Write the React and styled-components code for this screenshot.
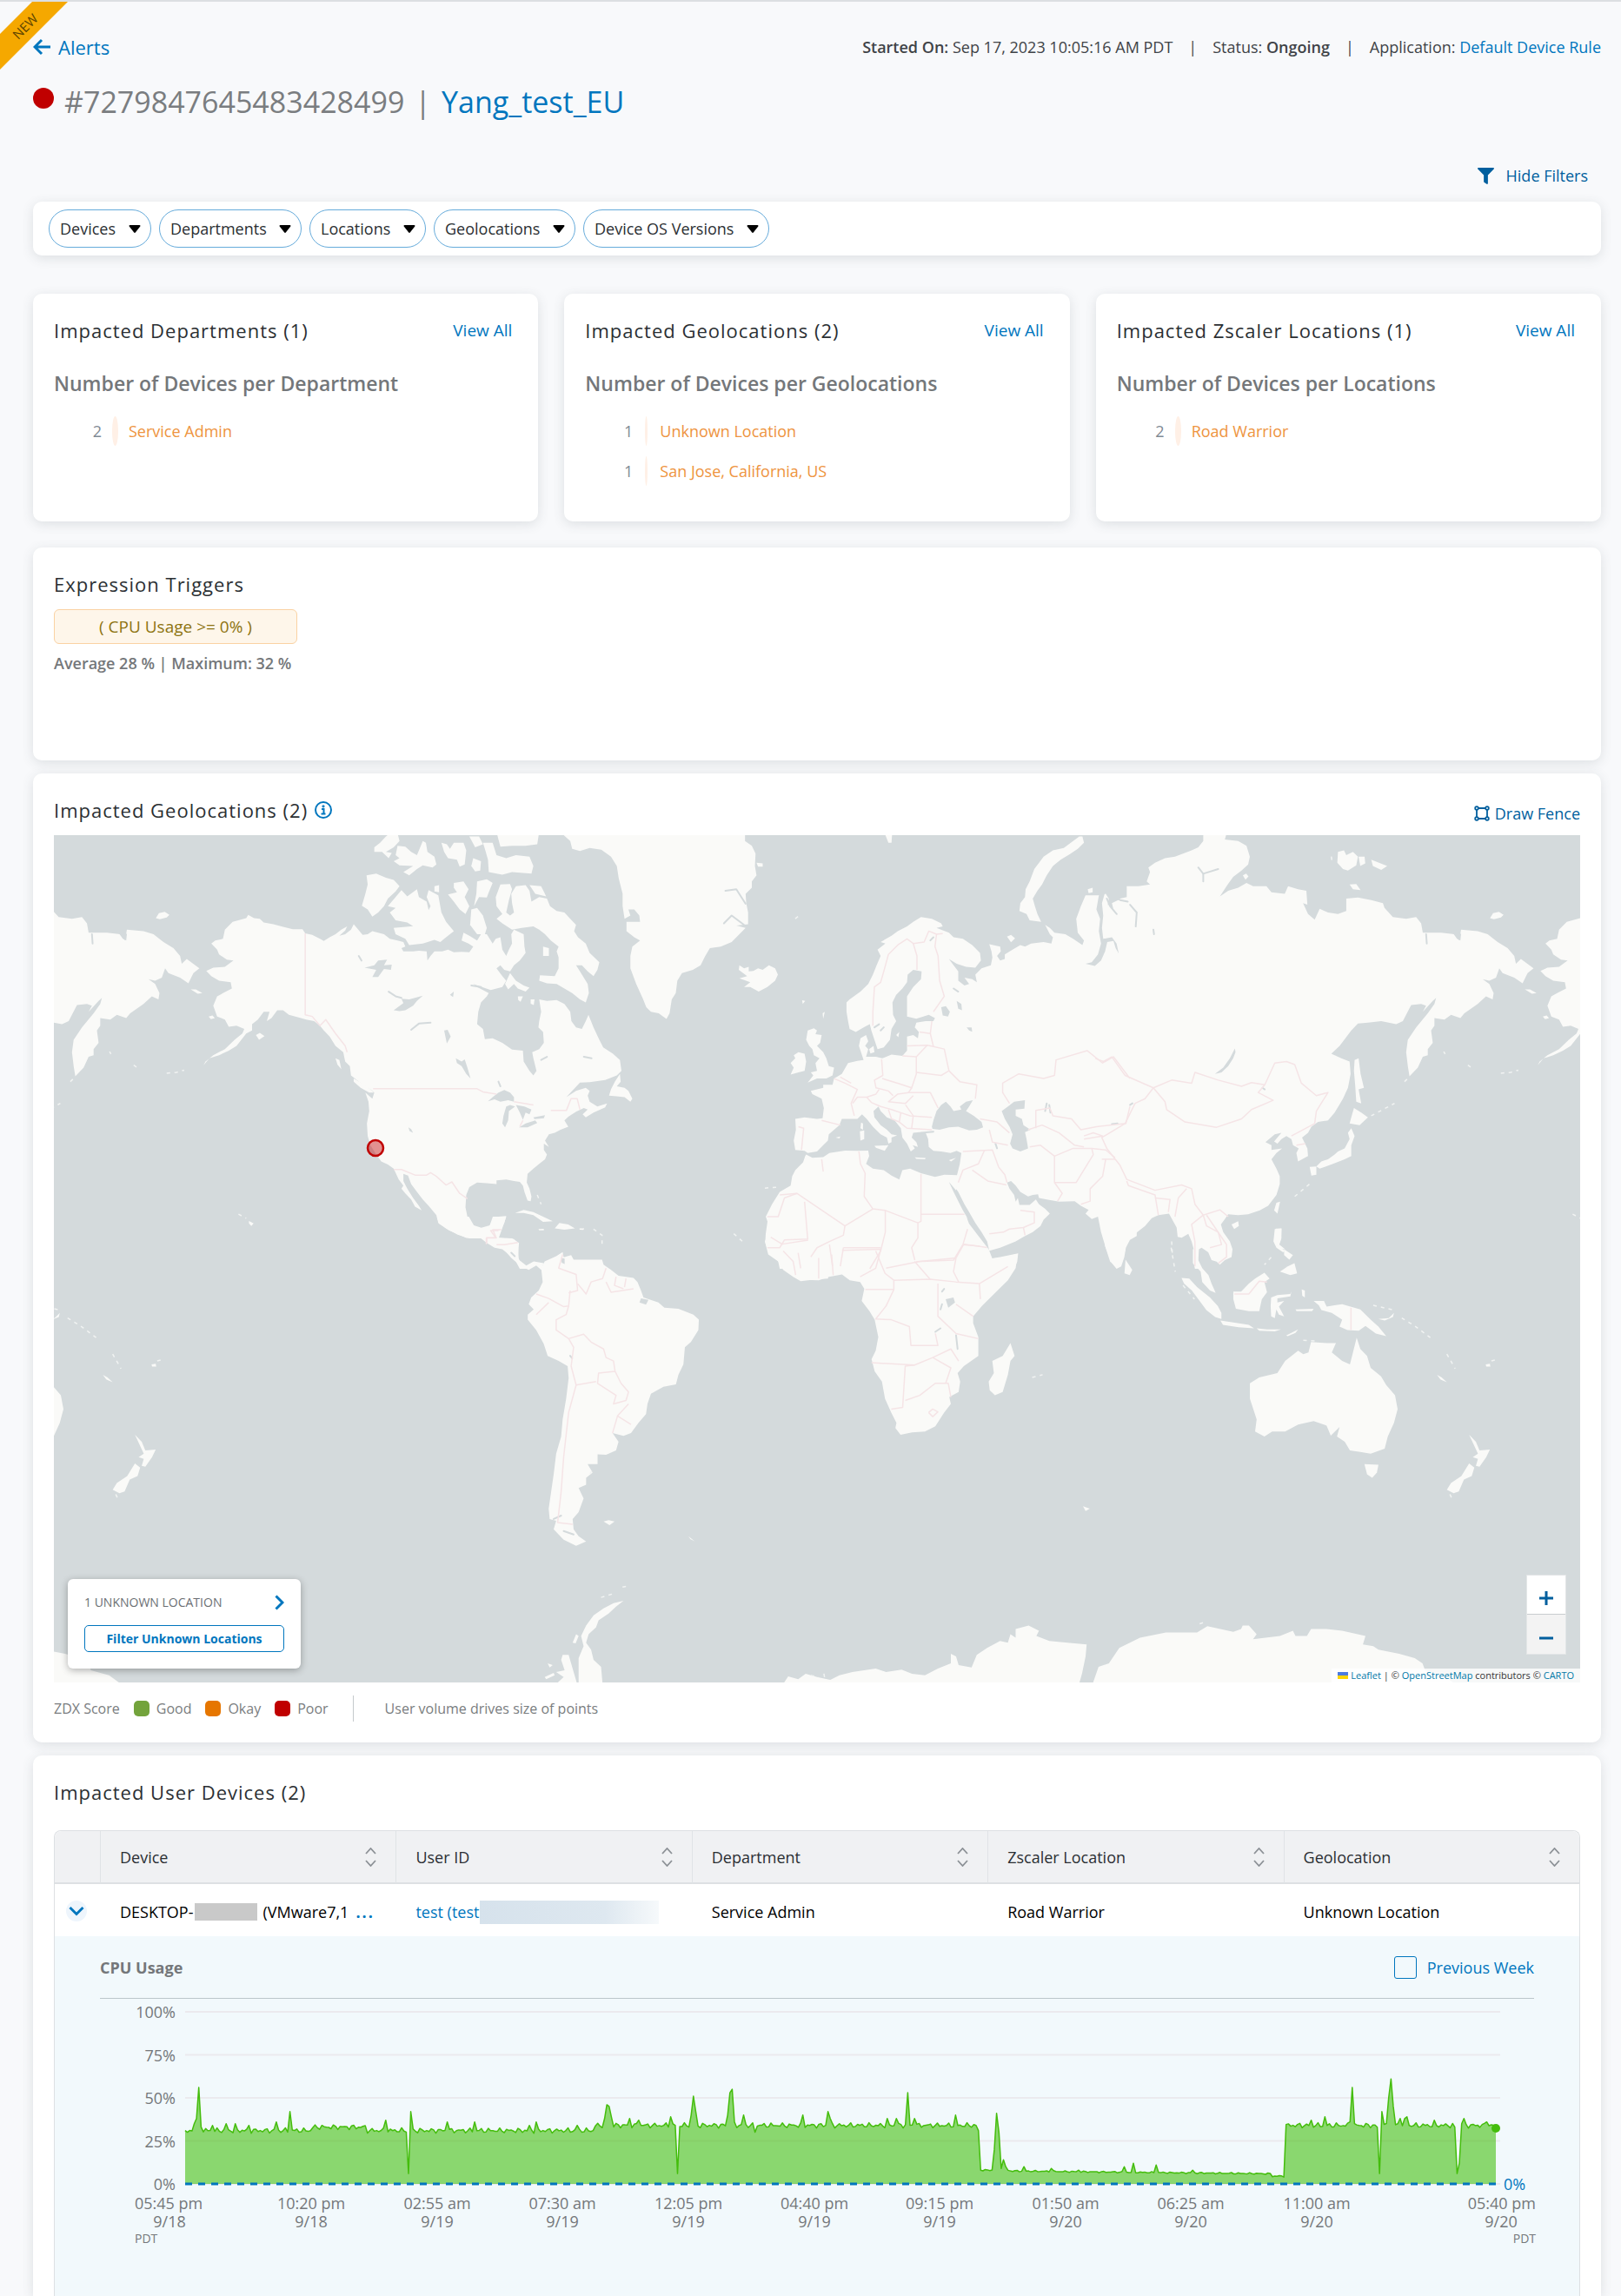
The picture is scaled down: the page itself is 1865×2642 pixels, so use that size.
import React, { useState } from 'react';
import styled, { createGlobalStyle } from 'styled-components';
import { FaFilter } from 'react-icons/fa';

const BLUE = '#0076be';
const DARK_BLUE = '#005f9e';

const GlobalStyle = createGlobalStyle`
  * {
    box-sizing: border-box;
  }

  body {
    margin: 0;
    background: #f8f9fb;
    color: #2b2f33;
    font-family: 'Open Sans', 'Noto Sans', sans-serif;
    font-size: 18px;
    line-height: 28px;
  }

  button,
  select,
  input {
    font: inherit;
    color: inherit;
  }

  h1,
  h2,
  h3,
  p,
  ul {
    margin: 0;
    padding: 0;
    font-weight: 400;
  }

  a {
    color: ${BLUE};
    text-decoration: none;
  }
`;

const Page = styled.main`
  position: relative;
  padding: 38px 23px 0 38px;
  border-top: 2px solid #dcdfe2;
`;

const RibbonClip = styled.div`
  position: absolute;
  top: 0;
  left: 0;
  width: 84px;
  height: 84px;
  overflow: hidden;
`;

const Ribbon = styled.span`
  position: absolute;
  top: 14px;
  left: -36px;
  width: 130px;
  background: #f5a800;
  color: #5c4300;
  font-size: 15px;
  line-height: 29px;
  text-align: center;
  transform: rotate(-45deg);
`;

const TopBar = styled.header`
  display: flex;
  align-items: center;
  justify-content: space-between;
`;

const BackLink = styled.a`
  display: flex;
  align-items: center;
  gap: 8px;
  font-size: 22px;
`;

const Meta = styled.div`
  display: flex;
  gap: 18px;
  color: #3f4347;

  strong {
    font-weight: 600;
  }
`;

const AlertTitle = styled.h1`
  display: flex;
  align-items: center;
  gap: 12px;
  margin-top: 25px;
  color: #7a7d80;
  font-size: 34px;
  line-height: 48px;
`;

const StatusDot = styled.span`
  width: 24px;
  height: 24px;
  margin-bottom: 8px;
  border-radius: 50%;
  background: #c00000;
`;

const FilterToggle = styled.button`
  display: flex;
  align-items: center;
  gap: 14px;
  margin: 47px 15px 16px auto;
  padding: 0;
  border: 0;
  background: none;
  color: ${DARK_BLUE};
  cursor: pointer;
`;

const Surface = styled.section`
  border-radius: 10px;
  background: #fff;
  box-shadow: 0 3px 14px rgba(60, 70, 80, 0.14);
`;

const FilterBar = styled(Surface)`
  display: flex;
  flex-wrap: wrap;
  gap: 9px;
  padding: 9px 18px;
`;

const Pill = styled.label`
  display: grid;
  align-items: center;

  > * {
    grid-area: 1 / 1;
  }

  svg {
    justify-self: end;
    margin-right: 12px;
    pointer-events: none;
  }
`;

const PillSelect = styled.select`
  height: 44px;
  padding: 0 39px 0 12px;
  border: 1px solid #66abdb;
  border-radius: 22px;
  background: #fff;
  appearance: none;
  cursor: pointer;
`;

const CardRow = styled.div`
  display: grid;
  grid-template-columns: repeat(3, 1fr);
  gap: 30px;
  margin: 44px 0 30px;
`;

const Card = styled(Surface)`
  min-height: ${(p) => p.$minHeight || 0}px;
  margin-bottom: ${(p) => p.$gap || 0}px;
  padding: 26px 24px ${(p) => (p.$open ? 0 : 24)}px;
  border-radius: ${(p) => (p.$open ? '10px 10px 0 0' : '10px')};
`;

const CardHead = styled.div`
  display: flex;
  align-items: ${(p) => p.$align || 'center'};
  justify-content: space-between;
  padding-right: ${(p) => p.$inset || 0}px;
`;

const CardTitle = styled.h2`
  display: flex;
  align-items: center;
  gap: 8px;
  font-size: 22px;
  line-height: 32px;
  letter-spacing: 1px;
`;

const ViewAll = styled.a`
  font-size: 19px;
`;

const SubTitle = styled.h3`
  margin: 30px 0 17px;
  color: #74777a;
  font-size: 23px;
  font-weight: 600;
  line-height: 30px;
`;

const CountRow = styled.li`
  display: grid;
  grid-template-columns: 55px 7px 1fr;
  gap: 12px;
  align-items: center;
  height: 46px;
  color: #7f8a94;
  list-style: none;

  span {
    text-align: right;
  }

  i {
    justify-self: center;
    width: ${(p) => (p.$thin ? 3 : 7)}px;
    height: 34px;
    border-radius: 50%;
    background: #fff0e6;
  }

  a {
    color: #ee9440;
  }
`;

const Trigger = styled.p`
  width: 280px;
  margin: 13px 0 8px;
  border: 1px solid #fad2a3;
  border-radius: 6px;
  background: #fef6ea;
  color: #8d7310;
  font-size: 19px;
  line-height: 38px;
  text-align: center;
`;

const TriggerStats = styled.p`
  color: #74777a;
  font-weight: 600;
`;

const TextButton = styled.button`
  display: flex;
  align-items: center;
  gap: 6px;
  padding: 0;
  border: 0;
  background: none;
  color: ${DARK_BLUE};
  line-height: 24px;
  cursor: pointer;
`;

const MapFrame = styled.div`
  position: relative;
  height: 975px;
  margin: 13px 0 15px;
  overflow: hidden;
  background: #d4dadc;
`;

const MapSvg = styled.svg`
  display: block;
  width: 100%;
  height: 100%;

  .land {
    fill: #fafaf8;
  }

  .islets {
    fill: none;
    stroke: #f1f3f2;
    stroke-width: 1.5;
    stroke-dasharray: 4 5;
  }

  .water {
    fill: #d4dadc;
  }

  .river {
    fill: none;
    stroke: #d4dadc;
    stroke-width: 2;
  }

  .border {
    fill: none;
    stroke: #f5e4e6;
    stroke-width: 1.5;
  }

  polygon,
  polyline {
    stroke-linejoin: round;
    vector-effect: non-scaling-stroke;
  }
`;

const UnknownBox = styled.div`
  position: absolute;
  bottom: 16px;
  left: 16px;
  width: 268px;
  padding: 14px 19px 19px;
  border-radius: 6px;
  background: #fff;
  box-shadow: 0 2px 8px rgba(0, 0, 0, 0.3);
  color: #6b6f73;
  font-size: 14px;
`;

const UnknownHead = styled.div`
  display: flex;
  align-items: center;
  justify-content: space-between;
  line-height: 26px;
`;

const OutlineButton = styled.button`
  width: 100%;
  height: 31px;
  margin-top: 13px;
  padding: 0;
  border: 1px solid ${BLUE};
  border-radius: 5px;
  background: #fff;
  color: ${BLUE};
  font-weight: 700;
  line-height: 28px;
`;

const ZoomControl = styled.div`
  position: absolute;
  right: 16px;
  bottom: 32px;
  display: flex;
  flex-direction: column;
  border: 1px solid #e3e6e7;
`;

const ZoomButton = styled.button`
  display: flex;
  align-items: center;
  justify-content: center;
  width: 44px;
  height: 45px;
  padding: 8px 0 0;
  border: 0;
  border-bottom: ${(p) => (p.$off ? 0 : '1px solid #c8cccf')};
  background: ${(p) => (p.$off ? '#f3f3f3' : '#fff')};
`;

const Attribution = styled.div`
  position: absolute;
  right: 0;
  bottom: 0;
  display: flex;
  align-items: center;
  gap: 3px;
  padding: 0 7px;
  background: rgba(255, 255, 255, 0.8);
  color: #333;
  font-size: 11px;
  line-height: 16px;

  a {
    color: #0078a8;
  }
`;

const Legend = styled.div`
  display: flex;
  align-items: center;
  height: 30px;
  color: #7a7d80;
  font-size: 16px;
`;

const Swatch = styled.span`
  display: flex;
  align-items: center;
  gap: 8px;
  margin-left: 16px;

  &::before {
    width: 18px;
    height: 18px;
    border-radius: 5px;
    background: ${(p) => p.$color};
    content: '';
  }
`;

const LegendNote = styled.span`
  margin-left: 28px;
  padding-left: 36px;
  border-left: 1px solid #c5c9cc;
  line-height: 30px;
`;

const DeviceTable = styled.table`
  width: 100%;
  margin-top: 28px;
  border: 1px solid #dde0e3;
  border-bottom: 0;
  border-radius: 8px 8px 0 0;
  border-spacing: 0;
  table-layout: fixed;
`;

const HeadCell = styled.th`
  width: ${(p) => p.$width || 'auto'};
  height: 61px;
  padding: 0 22px;
  border-bottom: 2px solid #dde0e3;
  border-left: ${(p) => (p.$width ? 0 : '1px solid #e0e3e6')};
  background: #f0f1f3;
  font-weight: 400;
  text-align: left;

  &:first-child {
    border-top-left-radius: 8px;
  }

  &:last-child {
    border-top-right-radius: 8px;
  }

  > div {
    display: flex;
    align-items: center;
    justify-content: space-between;
  }
`;

const IconButton = styled.button`
  display: flex;
  align-items: center;
  justify-content: center;
  padding: 0;
  border: 0;
  border-radius: 50%;
  background: ${(p) => p.$bg || 'none'};
  cursor: pointer;
`;

const BodyCell = styled.td`
  height: 60px;
  padding: 4px 23px 0;
  color: #000;
  white-space: nowrap;

  &:first-child {
    padding: 2px 13px 0;
  }
`;

const CellLine = styled.div`
  display: flex;
  align-items: center;
`;

const Redacted = styled.span`
  width: ${(p) => p.$width}px;
  height: ${(p) => p.$height}px;
  margin: 0 7px 0 1px;
  background: ${(p) => p.$fill};
`;

const Dots = styled.a`
  margin-left: 8px;
  font-weight: 700;
  letter-spacing: 2px;
`;

const DetailCell = styled.td`
  padding: 0 52px;
  background: #f2f9fc;
`;

const DetailHead = styled.div`
  display: flex;
  align-items: center;
  justify-content: space-between;
  height: 72px;
  border-bottom: 1px solid #bcc6cb;
`;

const DetailTitle = styled.h3`
  color: #74777a;
  font-size: 18px;
  font-weight: 700;
`;

const CheckLabel = styled.label`
  display: flex;
  align-items: center;
  gap: 12px;
  color: ${BLUE};
`;

const CheckBox = styled.input`
  width: 26px;
  height: 26px;
  margin: 0;
  border: 1px solid ${BLUE};
  border-radius: 3px;
  appearance: none;

  &:checked {
    background: ${BLUE};
  }
`;

const ChartSvg = styled.svg`
  display: block;
  width: 100%;
  overflow: visible;

  text {
    fill: #74777a;
    font-size: 18px;
    text-anchor: middle;
  }

  .end {
    text-anchor: end;
  }

  .start {
    text-anchor: start;
  }

  .middle {
    text-anchor: middle;
  }

  .zone {
    font-size: 14px;
  }

  .now {
    fill: ${BLUE};
    text-anchor: start;
  }
`;

// Coastlines, grouped by region. Every region has its own digitising grid,
// the transform puts it on the 1756x975 mercator canvas.
const REGIONS = [
  {
    id: 'north-america',
    transform: 'translate(-22 -61) scale(0.44643 0.35714)',
    land: [
      '550,428 565,438 580,440 590,452 615,458 640,466 665,474 690,474 697,487 715,492 735,505 745,512 760,500 775,490 790,475 805,465 800,478 785,495 800,490 815,475 822,458 830,470 845,492 858,490 870,480 885,485 900,490 915,505 935,510 950,515 955,530 945,535 950,545 975,545 990,543 1010,545 1012,575 1020,560 1030,545 1050,545 1065,540 1080,548 1100,547 1120,548 1130,530 1118,520 1100,510 1105,485 1120,495 1140,510 1150,490 1165,490 1180,520 1188,505 1200,500 1205,540 1215,560 1222,540 1230,520 1228,490 1235,475 1260,490 1262,530 1265,550 1250,575 1235,590 1225,610 1210,605 1200,590 1190,600 1205,625 1215,640 1205,660 1190,665 1175,670 1130,650 1140,660 1170,680 1165,690 1150,710 1143,740 1140,780 1155,795 1160,828 1180,825 1205,840 1230,862 1258,865 1260,900 1275,930 1285,945 1293,930 1285,890 1282,870 1300,860 1312,840 1310,805 1298,790 1300,770 1305,740 1300,700 1320,705 1345,702 1365,715 1380,740 1383,770 1395,790 1410,795 1420,770 1427,750 1440,790 1455,830 1465,855 1490,875 1508,895 1512,930 1500,945 1470,960 1430,967 1405,968 1385,995 1370,1015 1395,995 1420,985 1430,995 1425,1010 1430,1030 1450,1045 1475,1035 1470,1048 1440,1065 1420,1080 1412,1070 1425,1055 1415,1050 1395,1062 1375,1078 1365,1090 1375,1110 1355,1120 1340,1130 1325,1135 1315,1155 1325,1175 1312,1165 1312,1185 1320,1200 1315,1215 1300,1230 1285,1245 1270,1262 1268,1290 1275,1310 1280,1335 1278,1350 1270,1348 1262,1320 1258,1300 1250,1288 1235,1285 1215,1280 1190,1283 1190,1295 1165,1292 1140,1290 1120,1305 1112,1330 1110,1370 1115,1400 1125,1425 1145,1438 1170,1435 1180,1410 1195,1400 1215,1398 1210,1420 1200,1445 1195,1468 1230,1470 1248,1485 1245,1530 1255,1555 1275,1568 1250,1568 1240,1545 1225,1525 1205,1505 1185,1500 1165,1485 1150,1470 1120,1470 1090,1458 1060,1438 1040,1420 1035,1395 1015,1365 1000,1345 985,1320 970,1295 962,1268 950,1262 950,1285 960,1310 975,1340 990,1365 997,1380 980,1368 970,1345 955,1325 945,1310 950,1300 938,1280 925,1245 910,1232 893,1222 880,1200 865,1170 858,1140 856,1100 862,1060 860,1030 852,1000 870,1020 875,1000 865,990 845,975 830,960 815,945 812,915 800,900 795,870 775,850 760,820 745,800 735,785 720,770 700,765 680,758 655,750 640,735 625,735 610,760 598,770 605,740 590,740 575,765 560,780 560,800 545,810 520,850 500,865 475,880 450,890 435,912 440,900 460,880 490,860 515,830 535,810 540,795 520,785 500,788 490,765 470,755 460,720 470,690 485,680 508,665 505,645 475,640 455,625 442,608 460,598 490,595 512,575 495,572 475,555 470,540 455,520 465,510 485,505 490,475 510,450 545,438',
      '822,955 840,968 858,982 874,1000 862,1000 840,985 822,965',
      '775,890 785,895 790,925 780,910',
      '570,815 580,808 592,818 578,830',
      '1508,940 1510,965 1500,980 1520,985 1530,995 1540,1020 1535,1030 1520,1015 1500,1012 1480,1010 1485,990 1495,965',
      '855,300 880,295 905,308 925,315 940,335 930,352 910,375 900,400 885,420 870,433 858,410 843,398 852,360 858,330',
      '945,348 960,368 985,345 990,370 1010,385 1015,412 1020,400 1010,370 1015,348 1040,365 1048,420 1060,450 1080,480 1060,500 1045,515 1030,508 1000,520 965,525 955,505 930,490 925,470 975,464 960,452 930,445 915,420 930,405 910,400 930,370',
      '875,210 890,195 905,175 915,165 935,165 940,190 925,210 905,225 920,228 912,245 895,225 875,225',
      '935,205 955,208 970,225 985,235 1000,190 1008,195 1012,225 1030,240 1035,265 1025,275 1000,268 985,280 965,300 950,290 975,270 940,268 925,255 940,245 930,235',
      '1048,195 1062,200 1070,215 1080,195 1105,195 1112,220 1108,265 1095,272 1088,250 1065,245 1055,225',
      '1130,245 1150,255 1148,285 1135,288 1125,270',
      '1155,195 1180,195 1190,235 1215,245 1240,235 1275,240 1285,270 1280,295 1230,290 1205,298 1170,290 1168,250 1160,215',
      '1190,160 1300,160 1295,200 1265,205 1230,205 1200,208 1195,185',
      '1120,175 1145,175 1155,200 1135,210',
      '1080,325 1105,320 1118,345 1108,370 1120,400 1110,425 1095,410 1080,385 1065,362 1088,355 1080,340',
      '1140,320 1165,313 1180,325 1170,355 1165,372 1145,370 1132,400 1138,360',
      '1125,410 1140,405 1155,430 1165,470 1160,490 1140,490 1122,460',
      '1200,330 1225,328 1230,345 1222,380 1215,420 1225,430 1235,420 1230,390 1228,360 1240,335 1265,332 1275,350 1280,385 1300,370 1320,375 1328,400 1345,415 1365,420 1380,440 1395,460 1390,480 1400,500 1420,520 1430,550 1455,580 1450,605 1440,625 1425,610 1410,590 1395,590 1405,610 1425,650 1428,680 1420,710 1405,700 1385,680 1365,665 1345,650 1320,648 1300,640 1302,622 1340,625 1350,600 1350,565 1345,545 1350,530 1330,510 1315,490 1300,475 1285,465 1255,470 1230,475 1205,455 1190,440 1205,425 1190,400 1188,370',
      '1275,332 1305,335 1318,368 1290,360',
      '1225,615 1240,640 1260,655 1275,662 1265,675 1245,665 1235,650 1220,668 1212,650',
      '1310,530 1325,535 1325,560 1310,560',
      '1030,335 1042,332 1042,355 1030,352',
      '1245,690 1258,690 1252,708 1246,702',
      '1278,700 1288,700 1286,718 1278,714',
      '1358,165 1380,190 1385,215 1405,222 1430,212 1460,218 1485,240 1500,270 1505,310 1515,360 1515,400 1520,440 1535,430 1530,410 1545,410 1558,430 1560,450 1525,450 1525,480 1545,500 1560,510 1540,530 1535,560 1535,600 1550,650 1568,700 1590,705 1590,165',
      '402,668 415,668 432,680 420,682',
      '448,755 458,752 464,760 454,764',
      '312,438 320,422 335,418 347,428 340,436 322,442',
      '1238,1388 1260,1378 1285,1385 1310,1400 1335,1415 1310,1417 1285,1395 1260,1388',
      '1340,1438 1352,1420 1375,1425 1392,1438 1365,1442',
      '1298,1440 1312,1439 1312,1444 1300,1444',
      '1404,1438 1416,1438 1414,1443 1404,1442',
      '552,1414 564,1422 558,1430 552,1422',
    ],
    islets: ['525,1392 545,1405', '340,938 365,935 385,928', '255,912 262,918', '1295,1330 1305,1360', '1440,1440 1462,1460 1462,1500'],
    water: [
      '1168,1028 1180,1015 1195,1000 1210,992 1225,1000 1235,1015 1235,1030 1220,1025 1200,1030 1185,1022',
      '1215,1045 1208,1075 1205,1100 1212,1112 1220,1090 1222,1060 1238,1045 1225,1040',
      '1240,1040 1262,1045 1280,1055 1275,1070 1265,1065 1258,1088 1250,1065',
      '1248,1112 1265,1100 1290,1090 1295,1098 1270,1112',
      '1285,1080 1315,1073 1312,1083 1288,1086',
      '1085,890 1100,900 1108,893 1115,920 1123,955 1112,940 1100,915 1088,905',
      '850,598 875,590 885,575 908,572 900,590 920,588 918,605 900,602 885,628 870,628 880,605',
      '925,735 950,712 945,698 965,700 1000,688 985,705 975,720 955,735 940,738',
      '1070,685 1080,675 1078,692',
      '1055,800 1064,798 1072,820 1062,842',
      '963,1112 970,1118 975,1130 966,1124',
    ],
    river: ['912,675 930,690 945,695', '970,798 990,778 1020,775', '835,560 842,575', '1125,655 1150,660', '1195,965 1200,980', '1305,895 1320,885', '1415,885 1435,890'],
    border: [
      '697,487 697,750 715,755 735,785 750,765 775,810 800,850 805,870',
      '872,988 1140,988 1155,998 1190,1005',
      '1235,1030 1285,1040',
      '1330,1058 1370,1058 1382,1020 1398,1020 1405,1055',
      '925,1248 945,1248 980,1266 1010,1266 1020,1258 1035,1270 1060,1298 1075,1288 1095,1325 1115,1342',
      '1165,1485 1165,1468 1188,1468 1175,1445 1195,1445',
      '1190,1490 1210,1490 1245,1483',
      '1250,1110 1258,1090',
    ],
  },
  {
    id: 'europe-africa',
    transform: 'translate(678 -61) scale(0.35714)',
    land: [
      '0,165 0,700 10,725 25,740 50,745 75,763 85,745 92,700 105,680 110,640 125,615 160,605 185,590 200,560 215,535 250,530 285,515 305,495 330,470 300,462 338,458 338,420 332,390 330,360 350,340 350,320 365,300 360,270 362,230 350,205 328,190 328,165',
      '365,260 385,262 385,272 370,272',
      '310,590 325,600 340,595 340,610 355,608 370,600 385,605 405,590 425,600 434,620 425,640 400,660 372,675 345,660 325,660 345,645 310,632 335,625 308,605',
      '778,165 790,195 800,195 802,165',
      '1415,175 1420,195 1400,215 1375,232 1345,250 1320,270 1300,300 1285,330 1270,350 1255,375 1262,400 1270,425 1282,450 1245,445 1235,425 1212,415 1215,390 1230,370 1232,345 1245,320 1260,280 1290,240 1320,220 1355,212 1385,190 1405,175',
      '1172,498 1185,492 1198,503 1185,516',
      '1432,345 1448,340 1448,355 1435,358',
      '655,710 665,700 700,675 725,650 740,620 752,590 765,560 755,540 780,520 765,515 800,495 820,480 850,465 870,450 895,435 930,440 960,455 965,465 945,470 985,485 1000,500 1030,505 1060,525 1085,550 1088,575 1070,598 1040,595 1010,585 985,570 1000,590 1015,610 1015,640 1035,655 1050,650 1035,630 1060,635 1075,645 1070,620 1090,600 1120,590 1125,565 1122,545 1115,522 1150,530 1152,545 1140,560 1150,575 1165,570 1165,555 1190,540 1215,525 1230,530 1250,520 1290,515 1315,520 1320,500 1310,490 1295,460 1310,470 1325,485 1360,490 1385,505 1415,525 1420,510 1400,485 1395,440 1410,400 1425,365 1465,365 1490,360 1500,375 1495,405 1510,425 1540,435 1515,410 1510,390 1530,380 1550,385 1568,395 1590,395 1590,1462 1568,1475 1555,1500 1550,1530 1540,1560 1525,1568 1510,1550 1490,1500 1475,1450 1465,1400 1445,1408 1425,1390 1435,1378 1410,1365 1390,1350 1340,1352 1300,1345 1275,1340 1272,1328 1255,1330 1240,1335 1215,1320 1200,1300 1185,1285 1172,1290 1180,1310 1195,1330 1200,1352 1207,1340 1212,1362 1245,1362 1265,1345 1275,1360 1295,1375 1310,1390 1290,1410 1280,1430 1255,1450 1225,1465 1200,1480 1150,1500 1115,1510 1108,1480 1090,1450 1070,1420 1050,1385 1035,1360 1015,1320 1000,1300 1010,1270 1020,1230 1025,1195 1010,1188 990,1195 960,1190 935,1188 920,1175 918,1150 910,1130 890,1128 870,1130 865,1145 880,1160 885,1175 868,1170 875,1180 862,1190 850,1165 835,1145 830,1115 810,1090 785,1080 765,1060 758,1045 742,1060 745,1080 765,1105 785,1120 800,1135 818,1138 800,1145 800,1160 790,1165 785,1145 765,1135 740,1110 720,1085 705,1070 690,1085 665,1085 640,1085 632,1105 615,1120 598,1135 595,1155 580,1170 560,1190 530,1195 520,1188 490,1185 485,1155 492,1120 490,1085 520,1080 560,1085 578,1083 582,1050 575,1020 545,1005 540,995 560,990 580,985 580,975 610,975 615,955 640,940 660,905 690,898 710,895 705,880 695,850 700,825 718,815 725,835 715,850 725,860 718,885 750,885 770,890 800,878 835,882 850,865 850,820 870,815 885,825 888,805 875,790 880,775 910,770 935,770 940,760 920,750 880,762 850,755 850,715 850,690 870,660 895,635 897,610 870,605 852,620 850,645 835,665 815,685 803,710 805,750 815,770 800,795 795,830 775,855 755,860 745,830 735,800 730,780 710,790 685,805 665,795 660,770 655,740',
      '530,800 550,793 560,800 555,812 575,815 570,840 560,850 580,870 590,890 598,915 615,920 610,945 590,955 560,955 530,968 548,945 540,935 560,930 555,905 568,890 550,880 545,860 535,850 525,830',
      '500,870 520,875 525,900 520,930 500,935 475,942 485,920 475,905 490,890 485,880',
      '728,860 742,850 745,870 732,874',
      '815,815 825,805 822,822',
      '702,1097 708,1100 708,1120 700,1115',
      '698,1125 712,1122 712,1150 700,1155',
      '745,1172 790,1170 778,1188 750,1178',
      '875,1209 910,1211 908,1215 880,1214',
      '985,1218 1008,1210 992,1222',
      '620,1145 635,1142 632,1148',
      '512,703 522,705 514,715',
      '578,745 585,740 580,762',
      '525,1200 545,1210 580,1208 600,1195 650,1187 690,1188 725,1187 728,1205 718,1230 740,1245 775,1250 800,1268 825,1280 835,1250 860,1245 895,1260 940,1272 970,1265 1012,1266 1008,1315 985,1288 1000,1320 1015,1350 1030,1380 1042,1400 1045,1430 1065,1460 1085,1490 1105,1505 1115,1515 1120,1535 1150,1530 1208,1518 1205,1545 1195,1568 460,1568 440,1568 435,1545 420,1525 400,1505 392,1480 402,1455 402,1420 395,1400 415,1360 440,1320 475,1300 480,1270 490,1250 515,1225 522,1205',
    ],
    islets: ['392,1308 435,1305', '292,1455 320,1480', '490,440 500,432'],
    water: [
      '930,1110 935,1090 945,1060 960,1040 975,1030 990,1045 1000,1060 1025,1055 1020,1045 1040,1030 1062,1025 1050,1045 1040,1060 1065,1075 1090,1095 1095,1112 1075,1120 1050,1122 1015,1110 985,1112 955,1120 932,1117',
      '1155,1060 1175,1045 1195,1030 1230,1025 1228,1052 1200,1055 1200,1075 1220,1085 1225,1105 1248,1120 1230,1128 1235,1150 1240,1180 1215,1190 1190,1180 1182,1165 1190,1135 1180,1110 1165,1085',
      '960,725 975,722 988,740 982,755 965,752',
      '1010,705 1025,715 1027,735 1015,730',
      '1042,790 1058,790 1060,804 1050,800',
      '1470,355 1488,355 1478,390 1482,430 1478,470 1482,505 1510,500 1525,520 1532,552 1522,535 1515,512 1495,515 1488,545 1475,575 1455,592 1425,585 1445,580 1465,555 1475,520 1468,480 1472,440 1460,410 1467,370',
    ],
    river: ['265,350 300,345 330,392', '260,455 285,430 325,460', '1300,1035 1295,1060', '1308,1040 1312,1065', '745,790 760,780', '765,800 775,790', '895,1130 935,1126', '925,510 935,500', '1000,665 1015,675', '1510,1102 1528,1100', '1135,1165 1140,1180'],
    border: [
      '740,785 740,740 745,660 765,645 775,610 790,555 820,525 850,505 870,520 905,515 920,480 945,490 965,488',
      '945,490 940,530 950,560 955,640 970,690 935,740',
      '870,520 882,560 882,605',
      '768,893 772,945 745,960 750,985 790,995 805,1010',
      '770,955 820,970 865,985 880,940 880,885 835,882',
      '850,850 915,848 935,852 925,810 890,805',
      '925,810 930,770',
      '880,935 960,945 985,930 970,860 935,852',
      '880,885 915,848',
      '985,930 1020,965 1075,975 1070,1020',
      '865,985 855,1000 925,1000 950,1050',
      '855,1000 820,1005 790,1030 845,1035 870,1010',
      '675,1035 690,1015 720,1015 750,1005 760,990',
      '615,955 650,970 690,990 670,1035 680,1075',
      '635,950 670,970',
      '720,1015 735,1032 765,1045 800,1055 830,1065 860,1075 930,1080',
      '830,1065 825,1095 850,1115 930,1120',
      '845,1040 870,1075 865,1115',
      '790,1055 800,1085 825,1095',
      '575,1090 635,1105',
      '500,1110 517,1115 510,1185',
      '1180,1035 1158,1000 1158,970 1210,940 1290,955 1325,945 1330,895 1430,865 1480,905 1515,885 1568,955',
      '1265,1115 1265,1058 1310,1050 1320,1075 1380,1085 1410,1120 1460,1110 1555,1100 1568,1045',
      '1240,1120 1285,1105 1340,1130 1390,1170 1420,1175',
      '1420,1140 1450,1130 1480,1140 1420,1150',
      '1245,1175 1280,1170 1325,1205 1325,1290 1395,1290 1450,1200 1445,1180',
      '1325,1205 1385,1180 1445,1180 1490,1185 1520,1210',
      '1325,1290 1350,1325 1335,1350',
      '1410,1360 1440,1350 1440,1310 1480,1270 1490,1215',
      '1085,1085 1140,1095 1180,1130',
      '1115,1120 1125,1160 1175,1170',
      '1030,1190 1125,1185 1145,1240 1165,1265 1172,1290',
      '1100,1185 1080,1230 1030,1250 1015,1290',
      '1060,1250 1110,1285 1170,1298',
      '1115,1455 1160,1450 1180,1440 1225,1435 1260,1420 1260,1385 1215,1380',
      '1225,1435 1230,1460',
      '895,1262 895,1415 885,1420 885,1468 865,1500 875,1540',
      '895,1392 1035,1392',
      '885,1420 780,1380 740,1375 712,1335 715,1260 700,1230 695,1190',
      '740,1375 650,1430 495,1325 440,1330',
      '495,1325 455,1340 435,1400 400,1400',
      '520,1352 530,1472 455,1475 440,1500 400,1500',
      '650,1430 645,1460 600,1480 560,1500 540,1530',
      '780,1380 780,1450 765,1510 730,1568',
      '645,1500 765,1500',
      '645,1500 635,1560',
      '600,1490 610,1560',
      '575,1215 580,1255',
      '1045,1440 1030,1490 1085,1495',
      '1030,1490 1000,1540 880,1545',
    ],
  },
  {
    id: 'asia',
    transform: 'translate(1198 -61) scale(0.3827 0.35714)',
    land: [
      '95,335 130,335 165,330 155,320 165,290 160,275 180,260 210,245 240,240 290,220 310,210 325,190 325,165 395,165 390,185 430,190 455,205 465,240 460,265 440,285 415,305 395,335 375,368 400,350 430,340 455,325 475,335 515,335 530,355 570,360 580,335 610,345 635,350 638,395 625,390 640,425 660,443 675,408 700,420 730,425 755,415 755,375 790,372 830,380 865,390 870,405 895,435 935,440 965,435 980,455 985,485 1040,485 1080,490 1095,510 1100,475 1150,480 1180,490 1210,515 1240,535 1260,560 1265,585 1280,570 1318,600 1300,615 1285,648 1260,630 1225,615 1215,600 1205,630 1185,640 1165,635 1185,650 1198,680 1195,700 1175,690 1150,715 1110,745 1098,760 1070,750 1050,765 1020,760 1020,785 1010,800 1015,840 1000,860 1000,880 985,885 970,920 945,948 940,915 935,870 940,830 965,790 1000,745 1020,715 1025,695 1015,705 985,740 995,720 980,715 950,718 925,770 905,780 860,770 820,775 790,778 770,800 735,850 710,875 740,890 765,900 768,940 760,985 745,1020 720,1065 700,1090 670,1095 650,1110 640,1130 622,1145 638,1180 640,1205 610,1222 605,1195 612,1180 595,1170 590,1150 575,1140 560,1150 548,1165 538,1158 560,1130 540,1135 512,1160 530,1170 530,1185 562,1180 545,1195 530,1215 545,1245 555,1270 555,1295 545,1330 520,1365 495,1380 460,1392 430,1395 400,1392 390,1408 378,1425 385,1450 405,1480 413,1505 410,1530 390,1540 375,1555 365,1545 350,1540 340,1515 320,1500 312,1505 310,1540 315,1568 300,1568 295,1545 300,1520 290,1480 280,1455 260,1468 248,1465 245,1435 232,1410 222,1390 190,1395 170,1405 150,1430 120,1455 95,1475 90,1510 80,1550 65,1562 45,1545 30,1495 25,1450 25,400 40,395 60,415 75,375 95,370',
      '730,225 748,220 755,235 775,225 790,240 785,268 760,285 745,280 728,260',
      '792,240 810,240 812,262 797,270',
      '830,250 850,258 878,270 860,283 835,270',
      '765,330 785,328 798,348 775,345',
      '444,300 454,295 461,304 452,314',
      '780,895 792,890 798,940 808,985 792,990 800,1035 785,1030 782,980 778,930',
      '778,1050 800,1065 820,1080 795,1105 765,1100 770,1080',
      '770,1115 780,1140 770,1170 770,1205 750,1215 715,1230 690,1240 675,1245 665,1238 680,1222 700,1215 720,1200 730,1190 750,1180 765,1150 760,1130',
      '645,1240 665,1238 665,1265 650,1268',
      '545,1355 556,1352 548,1390 538,1380',
      '410,1425 430,1415 432,1430 418,1440',
      '540,1440 560,1438 560,1470 552,1495 570,1510 565,1515 545,1500 536,1480',
    ],
    islets: ['830,1075 900,1035', '930,965 940,955', '1048,868 1052,876', '600,1335 650,1290', '230,1480 232,1520', '710,240 712,255'],
    water: [
      '420,858 422,870 415,890 400,915 380,935 360,940 385,920 405,890',
      '1070,478 1085,475 1100,490 1098,510 1088,505',
    ],
    river: ['310,275 325,295 325,320', '325,295 370,280', '35,375 45,400 65,425', '105,395 125,420 122,465', '98,385 75,380', '995,490 997,520', '175,475 177,490', '503,985 510,990', '105,1040 112,1035'],
    border: [
      '0,890 25,900 50,885 90,945 175,985 150,1020 120,1035 90,1100 20,1145 35,1180 75,1235 95,1280 180,1315 260,1298 290,1310 300,1360 325,1395 375,1378 400,1400',
      '175,985 230,960 290,970 300,935 370,960 440,980 470,968 510,975 540,905 575,900 600,910 620,970 665,1010 700,1000 665,1060 660,1100 590,1140',
      '175,985 210,1030 215,1055 270,1095 365,1112 440,1085 470,1055 535,1025 490,1000 510,975',
      '95,1285 100,1300 180,1330 190,1395',
      '180,1340 225,1345 220,1385',
      '240,1400 250,1340 275,1310',
      '325,1395 290,1425 300,1480 300,1560',
      '325,1395 335,1430 370,1450 380,1490 345,1500',
      '335,1395 395,1490 395,1530 370,1550',
      '20,1215 60,1215',
      '605,1170 632,1165',
    ],
  },
  {
    id: 'south-america',
    transform: 'translate(-22 439) scale(0.57405 0.39541)',
    land: [
      '806,0 810,20 830,40 865,62 895,60 915,80 940,95 955,120 975,145 990,155 1005,142 1015,155 1020,135 1000,130 985,142 970,125 968,75 960,65 930,62 938,30 945,0 918,0 912,25 895,32 880,25 870,0',
      '1015,150 1022,130 1045,115 1058,103 1060,118 1075,112 1080,125 1105,125 1137,125 1140,140 1155,155 1170,172 1200,178 1208,190 1215,215 1220,235 1250,250 1262,265 1290,268 1320,285 1331,300 1330,330 1315,365 1303,380 1300,430 1290,460 1285,488 1260,495 1235,515 1228,545 1225,575 1210,600 1195,630 1180,638 1158,630 1170,655 1165,680 1145,693 1128,692 1128,720 1108,720 1118,745 1105,760 1105,780 1090,790 1100,820 1090,860 1078,880 1080,910 1090,930 1105,945 1085,958 1060,940 1040,910 1045,885 1032,880 1030,850 1035,800 1040,750 1045,690 1055,640 1058,590 1065,530 1070,470 1068,435 1050,420 1028,405 1020,370 1005,330 988,300 988,285 1000,270 990,255 995,235 1010,215 1018,190',
      '1140,887 1150,883 1162,887 1152,898',
      '1310,930 1323,945 1314,938',
      '1180,1118 1160,1125 1140,1140 1120,1160 1105,1190 1095,1220 1100,1250 1090,1285 1090,1360 1138,1360 1135,1310 1120,1290 1115,1260 1105,1240 1110,1215 1125,1195 1130,1175 1150,1155 1165,1135',
      '1078,1240 1085,1215 1090,1220 1084,1242',
      '1058,1275 1070,1275 1087,1360 1045,1360 1060,1340 1045,1325 1062,1320 1055,1290',
      '1022,1340 1040,1328 1042,1335 1025,1346',
      '1028,1300 1038,1305 1032,1312',
      '1500,1360 1510,1338 1530,1346 1545,1330 1568,1340 1600,1350 1600,1360',
      '1470,0 1465,50 1464,75 1470,110 1490,130 1500,155 1520,175 1535,188 1568,182 1590,180 1590,0',
    ],
    islets: ['1135,1108 1165,1095', '1178,1078 1186,1076', '1113,748 1116,740'],
    water: ['1215,238 1230,242 1225,256 1212,250', '1055,120 1062,122 1062,138 1056,134'],
    river: ['955,105 962,115', '1073,405 1077,412', '1040,880 1055,870', '1060,915 1080,925'],
    border: [
      '1058,110 1050,150 1085,168 1088,215 1070,222',
      '1005,225 1030,238 1060,262 1070,260 1073,215',
      '1005,285 1030,250',
      '1070,260 1065,285 1045,300 1045,330 1070,355 1100,342 1115,365 1140,385 1145,410 1160,420 1163,450 1130,455 1128,485 1165,520 1160,545 1185,535 1190,510 1175,485 1163,450',
      '1070,355 1080,380 1075,435 1085,490 1125,480',
      '1085,490 1070,570 1060,700 1055,800 1048,890 1078,895',
      '1190,545 1168,580 1195,605',
      '1168,580 1158,630',
      '1088,195 1105,225 1115,190 1138,180 1145,150',
      '1145,190 1155,220 1200,210',
      '1165,175 1162,200 1180,210',
      '1185,180 1182,205',
      '905,80 905,62 925,62 918,38 935,38',
      '1475,60 1498,80 1550,68',
      '1500,100 1520,130 1525,170',
      '1530,105 1535,150',
    ],
  },
  {
    id: 'indian-ocean',
    transform: 'translate(868 439) scale(0.5963 0.39541)',
    land: [
      '-5,0 -5,184 20,185 40,175 65,168 80,185 100,190 108,210 103,245 118,275 128,300 135,350 130,390 122,415 128,450 142,480 148,530 160,570 170,600 168,615 178,635 200,628 225,625 245,610 262,570 275,545 272,525 290,510 293,480 288,455 300,435 328,405 328,350 318,310 318,290 335,260 365,215 385,185 400,150 404,108 375,118 355,122 348,95 325,50 310,20 305,0',
      '390,368 398,405 390,420 385,460 375,510 360,520 350,505 348,480 358,455 355,420 375,405',
      '612,125 625,155 620,170 610,165',
      '742,95 752,92 752,125 760,150 772,170 778,195 786,222 775,215 760,190 757,160 742,135',
      '720,178 735,180 750,205 775,235 790,260 797,280 797,298 785,292 768,272 755,245 740,215 725,195',
      '795,302 820,308 850,315 860,325 830,322 800,315',
      '865,325 885,328 912,328 900,334 870,332',
      '922,346 945,328 940,338 925,348',
      '820,218 835,218 850,195 862,180 880,163 890,180 880,190 885,220 875,240 870,275 850,275 825,268 820,240',
      '893,235 905,228 930,225 932,218 930,232 905,238 905,250 918,245 908,262 918,290 908,285 903,270 900,295 893,290 892,260',
      '910,160 925,145 938,135 943,165 930,170',
      '918,95 935,112 928,125 918,112',
      '902,35 913,35 912,65 908,80 920,95 910,95 900,75',
      '952,212 958,215 958,235 953,230',
      '940,270 975,268 972,275 942,275',
      '975,245 995,245 1000,262 1015,258 1030,255 1065,270 1085,300 1100,320 1115,348 1095,340 1075,318 1062,332 1040,330 1025,320 1030,300 1010,280 990,272 985,258',
      '1100,298 1120,295 1130,280 1128,292 1112,302',
      '1213,460 1222,468 1232,482 1220,474',
      '1307,430 1315,428 1316,436 1308,436',
      '970,365 1000,368 1018,368 1010,395 1030,420 1045,430 1050,400 1058,352 1065,385 1078,405 1085,440 1105,465 1115,490 1132,520 1137,560 1130,600 1118,640 1112,675 1085,690 1065,685 1045,680 1035,655 1020,640 1025,612 1008,637 1000,608 975,595 945,605 920,625 895,625 880,640 862,625 865,590 852,530 852,485 870,468 905,455 920,420 945,390 955,400 965,395',
      '1073,720 1100,722 1097,745 1088,760 1078,750',
      '1275,635 1288,655 1295,680 1315,678 1308,700 1295,728 1288,725 1292,705 1282,700 1292,690',
      '1275,718 1285,730 1280,755 1265,765 1255,800 1245,805 1232,795 1240,775 1260,755 1270,730',
      '530,843 543,850 535,857',
      '20,1362 40,1350 60,1335 85,1325 130,1315 150,1325 180,1318 200,1330 225,1335 250,1315 275,1300 275,1272 285,1280 290,1305 315,1312 325,1275 345,1255 370,1235 385,1240 390,1215 400,1225 400,1200 425,1190 445,1205 440,1220 465,1235 500,1240 537,1245 535,1280 528,1330 522,1362',
      '548,1362 560,1310 580,1300 600,1255 640,1225 690,1210 750,1210 770,1192 820,1208 835,1200 838,1190 850,1190 865,1215 858,1230 910,1220 935,1205 940,1220 962,1220 970,1200 1000,1200 1030,1205 1075,1220 1070,1245 1090,1250 1100,1260 1140,1272 1170,1285 1185,1300 1190,1320 1225,1335 1250,1362',
    ],
    islets: ['1145,295 1170,318 1200,352', '1232,400 1248,442', '1318,420 1327,416', '893,118 880,140', '432,468 452,460', '1090,258 1130,272', '723,200 745,240', '700,90 708,160', '1238,808 1241,818', '755,1185 765,1180', '5,1335 20,1340', '30,1330 32,1345', '955,360 985,362'],
    water: ['265,240 280,235 283,250 270,265'],
    river: ['245,335 255,325', '285,345 288,385', '258,255 255,270', '262,210 258,218'],
    border: [
      '130,100 148,165 165,185 235,182 285,190 330,195 385,145',
      '65,98 140,95 130,150 100,175',
      '215,130 285,120 300,80 345,90',
      '215,130 150,150',
      '205,130 235,182',
      '285,120 280,160 290,190',
      '330,195 332,240',
      '250,195 250,290 285,340 328,355',
      '285,255 318,290',
      '110,212 165,212 165,185',
      '165,212 150,260 130,298 160,300 195,320 198,375 250,375 245,340',
      '122,425 205,432 240,410 275,385 290,420',
      '205,432 187,435 182,555 160,560',
      '187,535 215,520 245,485 270,485 275,525',
      '240,410 275,440 265,485',
      '232,570 240,560 250,568 240,582 232,570',
      '20,120 20,180',
      '45,110 48,170',
      '1047,265 1047,330',
      '822,225 850,225 870,188 885,190',
    ],
  },
];

const DROPDOWNS = ['Devices', 'Departments', 'Locations', 'Geolocations', 'Device OS Versions'];

const SUMMARY = [
  {
    title: 'Impacted Departments (1)',
    sub: 'Number of Devices per Department',
    rows: [[2, 'Service Admin']],
  },
  {
    title: 'Impacted Geolocations (2)',
    sub: 'Number of Devices per Geolocations',
    rows: [
      [1, 'Unknown Location'],
      [1, 'San Jose, California, US'],
    ],
  },
  {
    title: 'Impacted Zscaler Locations (1)',
    sub: 'Number of Devices per Locations',
    rows: [[2, 'Road Warrior']],
  },
];

const COLUMNS = ['Device', 'User ID', 'Department', 'Zscaler Location', 'Geolocation'];

// CPU samples, one every five minutes. SPIKES overrides the quiet baseline.
const SPIKES = {
  0: 31, 1: 30, 2: 31, 4: 35, 5: 38, 6: 56, 7: 33, 12: 34, 18: 35, 22: 35, 28: 34, 40: 36, 46: 42, 88: 37, 98: 6, 99: 42,
  115: 36, 127: 36, 151: 34, 154: 36, 172: 34, 184: 38, 185: 46, 186: 45, 187: 39, 195: 38, 199: 37,
  213: 39, 216: 6, 222: 40, 223: 51, 224: 42, 238: 40, 239: 53, 240: 55, 241: 36, 245: 40, 250: 30,
  271: 40, 282: 42, 283: 38, 308: 38, 312: 38, 317: 53, 320: 38, 338: 40, 348: 31, 349: 8, 355: 20,
  356: 41, 357: 30, 358: 9, 359: 14, 360: 10, 368: 10, 380: 9, 392: 8, 412: 10, 416: 12, 426: 11,
  442: 8, 494: 37, 500: 39, 511: 36, 512: 56, 513: 35, 523: 33, 524: 6, 525: 42, 528: 50, 529: 61,
  530: 45, 533: 38, 535: 38, 536: 39, 548: 37, 557: 33, 558: 6, 559: 12, 560: 35, 561: 38, 571: 36,
  575: 32,
};

const baseline = (i) => {
  if (i < 180) return i > 55 && i < 80 ? 33 : 31;
  if (i < 349) return 34;
  if (i < 362) return 8;
  if (i < 477) return 7.5 - (i - 362) * 0.014;
  if (i < 483) return 4.5;
  return 34;
};

const CPU = Array.from({ length: 576 }, (_, i) => {
  if (SPIKES[i] !== undefined) return SPIKES[i];
  const swing = i > 348 && i < 483 ? 0.5 : 1.6;
  return baseline(i) + swing * Math.sin(i * 1.9) * Math.cos(i * 0.43);
});

const PLOT_LEFT = 98;
const PLOT_WIDTH = 1508;
const ZERO_Y = 213;

const cpuPoints = CPU.map(
  (v, i) => `${(PLOT_LEFT + (i / 575) * PLOT_WIDTH).toFixed(1)},${(ZERO_Y - v * 1.98).toFixed(1)}`
).join(' ');

const TICKS = [
  [243, '10:20 pm', '9/18'],
  [388, '02:55 am', '9/19'],
  [532, '07:30 am', '9/19'],
  [677, '12:05 pm', '9/19'],
  [822, '04:40 pm', '9/19'],
  [966, '09:15 pm', '9/19'],
  [1111, '01:50 am', '9/20'],
  [1255, '06:25 am', '9/20'],
  [1400, '11:00 am', '9/20'],
];

const ArrowLeft = () => (
  <svg width="21" height="20" viewBox="0 0 21 20" fill="none" stroke={BLUE} strokeWidth="3">
    <path d="M10 2 2 10l8 8M2 10h18" />
  </svg>
);

const InfoIcon = () => (
  <svg width="20" height="20" viewBox="0 0 20 20" fill="none" stroke={BLUE} strokeWidth="2">
    <circle cx="10" cy="10" r="9" />
    <path d="M8 9h2.500v5M7.500 14.500h5" />
    <circle cx="10" cy="5.800" r="0.600" />
  </svg>
);

const FenceIcon = () => (
  <svg width="18" height="18" viewBox="0 0 18 18" fill="#fff" stroke={DARK_BLUE} strokeWidth="1.800">
    <path d="M3 3h12v12H3z" />
    <circle cx="3" cy="3" r="1.800" />
    <circle cx="15" cy="3" r="1.800" />
    <circle cx="3" cy="15" r="1.800" />
    <circle cx="15" cy="15" r="1.800" />
  </svg>
);

const SortIcon = () => (
  <svg width="13" height="22" viewBox="0 0 13 22" fill="none" stroke="#8c9196" strokeWidth="1.800">
    <path d="M1 7l5.500-6L12 7M1 15l5.500 6L12 15" />
  </svg>
);

const Flag = () => (
  <svg width="12" height="8" viewBox="0 0 12 8">
    <path fill="#4c7be1" d="M0 0h12v4H0z" />
    <path fill="#ffd500" d="M0 4h12v4H0z" />
  </svg>
);

const WorldMap = () => (
  <MapSvg viewBox="0 0 1756 975" preserveAspectRatio="xMidYMid slice" role="img" aria-label="World map">
    <g id="world">
      {REGIONS.map((r) => (
        <g key={r.id} transform={r.transform}>
          {r.land.map((p) => <polygon key={p} className="land" points={p} />)}
          {r.islets.map((p) => <polyline key={p} className="islets" points={p} />)}
        </g>
      ))}
      {REGIONS.map((r) => (
        <g key={r.id} transform={r.transform}>
          {r.water.map((p) => <polygon key={p} className="water" points={p} />)}
          {r.river.map((p) => <polyline key={p} className="river" points={p} strokeLinecap="round" />)}
          {r.border.map((p) => <polyline key={p} className="border" points={p} />)}
        </g>
      ))}
    </g>
    <use href="#world" x="-1535" />
    <use href="#world" x="1535" />
    <circle cx="370" cy="360" r="9" fill="#c00000" fillOpacity="0.42" stroke="#c00000" strokeWidth="2.500" />
  </MapSvg>
);

const CpuChart = () => (
  <ChartSvg viewBox="0 0 1650 342" role="img" aria-label="CPU usage over two days">
    {[100, 75, 50, 25, 0].map((v) => (
      <g key={v}>
        <path d={`M${PLOT_LEFT} ${ZERO_Y - v * 1.98}H1611`} stroke="#ebeaee" strokeWidth="2" />
        <text className="end" x="87" y={ZERO_Y - v * 1.98 + 7}>{v}%</text>
      </g>
    ))}
    <polygon
      points={`${PLOT_LEFT},${ZERO_Y} ${cpuPoints} ${PLOT_LEFT + PLOT_WIDTH},${ZERO_Y}`}
      fill="#44c010"
      fillOpacity="0.6"
    />
    <polyline points={cpuPoints} fill="none" stroke="#44bd0c" strokeWidth="1.500" strokeLinejoin="round" />
    <path d={`M${PLOT_LEFT} ${ZERO_Y}H1606`} stroke={BLUE} strokeWidth="3" strokeDasharray="8 7" />
    <circle cx="1606" cy="149" r="5" fill="#44bd0c" />
    <text className="now" x="1615" y="220">0%</text>
    <text y="242">
      <tspan className="start" x="40">05:45 pm</tspan>
      <tspan className="middle" x="80" dy="21">9/18</tspan>
      <tspan className="start zone" x="40" dy="18">PDT</tspan>
    </text>
    {TICKS.map(([x, time, day]) => (
      <text key={time} y="242">
        <tspan x={x}>{time}</tspan>
        <tspan x={x} dy="21">{day}</tspan>
      </text>
    ))}
    <text y="242">
      <tspan className="end" x="1652">05:40 pm</tspan>
      <tspan className="middle" x="1612" dy="21">9/20</tspan>
      <tspan className="end zone" x="1652" dy="18">PDT</tspan>
    </text>
  </ChartSvg>
);

const App = () => {
  const [previousWeek, setPreviousWeek] = useState(false);

  return (
    <>
      <GlobalStyle />
      <Page>
        <RibbonClip>
          <Ribbon>NEW</Ribbon>
        </RibbonClip>

        <TopBar>
          <BackLink href="#alerts">
            <ArrowLeft />
            Alerts
          </BackLink>
          <Meta>
            <span><strong>Started On:</strong> Sep 17, 2023 10:05:16 AM PDT</span>
            <span>|</span>
            <span>Status: <strong>Ongoing</strong></span>
            <span>|</span>
            <span>Application: <a href="#rule">Default Device Rule</a></span>
          </Meta>
        </TopBar>

        <AlertTitle>
          <StatusDot />
          #7279847645483428499
          <span>|</span>
          <a href="#rule">Yang_test_EU</a>
        </AlertTitle>

        <FilterToggle type="button">
          <FaFilter size={19} />
          Hide Filters
        </FilterToggle>

        <FilterBar>
          {DROPDOWNS.map((name) => (
            <Pill key={name}>
              <PillSelect aria-label={name}>
                <option>{name}</option>
              </PillSelect>
              <svg width="14" height="9" viewBox="0 0 14 9">
                <path d="M1.500 0h11a1 1 0 0 1 .8 1.600L8 8.300a1.300 1.300 0 0 1-2 0L.7 1.600A1 1 0 0 1 1.500 0z" />
              </svg>
            </Pill>
          ))}
        </FilterBar>

        <CardRow>
          {SUMMARY.map((card) => (
            <Card key={card.title} $minHeight={262}>
              <CardHead $inset={6}>
                <CardTitle>{card.title}</CardTitle>
                <ViewAll href="#all">View All</ViewAll>
              </CardHead>
              <SubTitle>{card.sub}</SubTitle>
              <ul>
                {card.rows.map(([count, name]) => (
                  <CountRow key={name} $thin={card.rows.length > 1}>
                    <span>{count}</span>
                    <i />
                    <a href="#item">{name}</a>
                  </CountRow>
                ))}
              </ul>
            </Card>
          ))}
        </CardRow>

        <Card $minHeight={245} $gap={15}>
          <CardTitle>Expression Triggers</CardTitle>
          <Trigger>( CPU Usage &gt;= 0% )</Trigger>
          <TriggerStats>Average 28 % | Maximum: 32 %</TriggerStats>
        </Card>

        <Card $gap={15}>
          <CardHead $align="flex-end">
            <CardTitle>
              Impacted Geolocations (2)
              <InfoIcon />
            </CardTitle>
            <TextButton type="button">
              <FenceIcon />
              Draw Fence
            </TextButton>
          </CardHead>
          <MapFrame>
            <WorldMap />
            <UnknownBox>
              <UnknownHead>
                1 UNKNOWN LOCATION
                <IconButton type="button" aria-label="Show unknown locations">
                  <svg width="11" height="18" viewBox="0 0 11 18" fill="none" stroke={BLUE} strokeWidth="3">
                    <path d="M1.500 1.500 9 9l-7.500 7.500" />
                  </svg>
                </IconButton>
              </UnknownHead>
              <OutlineButton type="button">Filter Unknown Locations</OutlineButton>
            </UnknownBox>
            <ZoomControl>
              <ZoomButton type="button" aria-label="Zoom in">
                <svg width="16" height="16" viewBox="0 0 16 16" stroke={DARK_BLUE} strokeWidth="3">
                  <path d="M8 0v16M0 8h16" />
                </svg>
              </ZoomButton>
              <ZoomButton type="button" aria-label="Zoom out" $off>
                <svg width="16" height="16" viewBox="0 0 16 16" stroke={DARK_BLUE} strokeWidth="3">
                  <path d="M0 8h16" />
                </svg>
              </ZoomButton>
            </ZoomControl>
            <Attribution>
              <Flag />
              <span>
                <a href="#leaflet">Leaflet</a> | © <a href="#osm">OpenStreetMap</a> contributors © <a href="#carto">CARTO</a>
              </span>
            </Attribution>
          </MapFrame>
          <Legend>
            ZDX Score
            <Swatch $color="#73a33c">Good</Swatch>
            <Swatch $color="#e67600">Okay</Swatch>
            <Swatch $color="#c00000">Poor</Swatch>
            <LegendNote>User volume drives size of points</LegendNote>
          </Legend>
        </Card>

        <Card $open>
          <CardTitle>Impacted User Devices (2)</CardTitle>
          <DeviceTable>
            <thead>
              <tr>
                <HeadCell $width="52px" aria-label="Expand" />
                {COLUMNS.map((name) => (
                  <HeadCell key={name}>
                    <div>
                      {name}
                      <IconButton type="button" aria-label={`Sort by ${name}`}>
                        <SortIcon />
                      </IconButton>
                    </div>
                  </HeadCell>
                ))}
              </tr>
            </thead>
            <tbody>
              <tr>
                <BodyCell>
                  <IconButton type="button" aria-label="Collapse row" $bg="#eef5fc">
                    <svg width="24" height="24" viewBox="0 0 24 24" fill="none" stroke={BLUE} strokeWidth="3">
                      <path d="M4.500 8l7.500 7.500L19.500 8" />
                    </svg>
                  </IconButton>
                </BodyCell>
                <BodyCell>
                  <CellLine>
                    DESKTOP-
                    <Redacted $width={72} $height={20} $fill="#c9c9c9" />
                    (VMware7,1
                    <Dots href="#device">...</Dots>
                  </CellLine>
                </BodyCell>
                <BodyCell>
                  <CellLine>
                    <a href="#user">test (test</a>
                    <Redacted $width={206} $height={27} $fill="linear-gradient(90deg, #d6e2ec, #dee8f0 70%, #f6f9fb)" />
                  </CellLine>
                </BodyCell>
                <BodyCell>Service Admin</BodyCell>
                <BodyCell>Road Warrior</BodyCell>
                <BodyCell>Unknown Location</BodyCell>
              </tr>
              <tr>
                <DetailCell colSpan={6}>
                  <DetailHead>
                    <DetailTitle>CPU Usage</DetailTitle>
                    <CheckLabel>
                      <CheckBox
                        type="checkbox"
                        checked={previousWeek}
                        onChange={(e) => setPreviousWeek(e.target.checked)}
                      />
                      Previous Week
                    </CheckLabel>
                  </DetailHead>
                  <CpuChart />
                </DetailCell>
              </tr>
            </tbody>
          </DeviceTable>
        </Card>
      </Page>
    </>
  );
};

export default App;
